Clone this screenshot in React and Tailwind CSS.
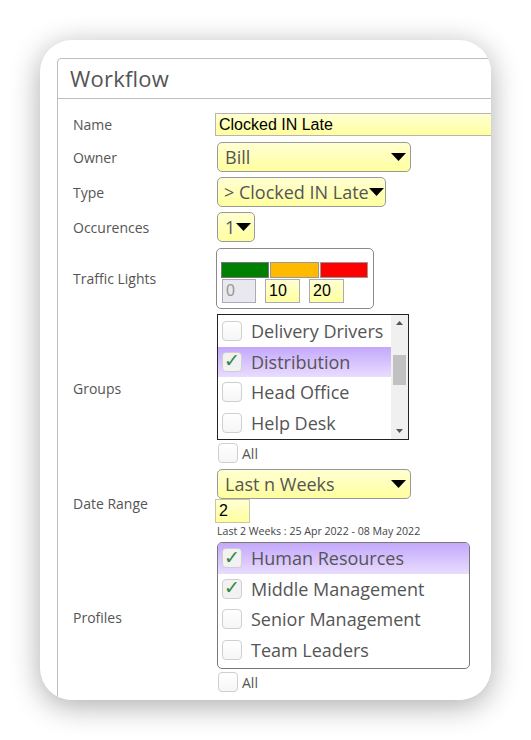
import React from "react";

const OS = { fontFamily: '"Open Sans", "Noto Sans", sans-serif' };
const AR = { fontFamily: '"Liberation Sans", Arial, sans-serif' };

function Tri() {
  return (
    <svg width="15" height="8" viewBox="0 0 15 8" className="shrink-0">
      <path d="M0 0H15L7.5 8Z" fill="#000" />
    </svg>
  );
}

function Check({ checked }) {
  return (
    <div
      className={`w-[20px] h-[20px] shrink-0 rounded-[4px] border border-[#cfcfcf] flex items-center justify-center ${
        checked ? "bg-[#f2f2f2]" : "bg-gradient-to-b from-white to-[#f6f6f6]"
      }`}
    >
      {checked && (
        <span
          className="text-[#2f8a3c] text-[19px] leading-none font-bold -mt-[2px]"
          style={{ fontFamily: '"DejaVu Sans", sans-serif' }}
        >
          ✓
        </span>
      )}
    </div>
  );
}

function Item({ text, checked, hl }) {
  return (
    <div
      className={`flex items-center h-[30.5px] pl-[4px] gap-[9px] ${
        hl ? "bg-gradient-to-b from-[#c4a8fb] to-[#e9dcfe]" : ""
      }`}
    >
      <Check checked={checked} />
      <span className="text-[18px] text-[#555] whitespace-nowrap leading-none" style={OS}>
        {text}
      </span>
    </div>
  );
}

function Row({ label, children, className = "" }) {
  return (
    <div className={`flex items-center ${className}`}>
      <div className="w-[144px] shrink-0 text-[14px] text-[#555]" style={OS}>
        {label}
      </div>
      <div className="flex flex-col">{children}</div>
    </div>
  );
}

function AllBox() {
  return (
    <div className="flex items-center gap-[4px] mt-[3px] h-[20px]">
      <div className="w-[20px] h-[20px] rounded-[4px] border border-[#cfcfcf] bg-gradient-to-b from-white to-[#f6f6f6]" />
      <span className="text-[14px] text-[#555]" style={OS}>All</span>
    </div>
  );
}

export default function App() {
  return (
    <div className="w-[531px] h-[740px] bg-white pt-[40px] pl-[40px]">
      <div className="w-[451px] h-[660px] bg-white rounded-[32px] overflow-hidden shadow-[0_6px_30px_rgba(0,0,0,0.33)] pt-[18px] pl-[17px]">
        <div className="w-[520px] h-[700px] border border-[#bdbdbd] rounded-tl-[4px] bg-white">
          <div className="h-[40px] border-b border-[#bdbdbd] flex items-center pl-[12px]">
            <span className="text-[22px] text-[#555] tracking-[0.2px] font-medium" style={OS}>
              Workflow
            </span>
          </div>
          <div className="pl-[15px] pt-[14px] flex flex-col">
            <Row label="Name">
              <div
                className="-ml-[2px] w-[320px] h-[23px] border border-[#b5b5b5] bg-gradient-to-b from-[#ffffd2] to-[#ffff9e] pl-[3px] flex items-center text-[16px] text-black"
                style={AR}
              >
                Clocked IN Late
              </div>
            </Row>
            <Row label="Owner" className="mt-[6px]">
              <div className="w-[194px] h-[30px] rounded-[5px] border border-[#999] bg-gradient-to-b from-[#ffffd2] to-[#ffff9e] pl-[7px] pr-[4px] flex items-center justify-between">
                <span className="text-[18px] text-[#555]" style={OS}>Bill</span>
                <Tri />
              </div>
            </Row>
            <Row label="Type" className="mt-[5px]">
              <div className="w-[169px] h-[30px] rounded-[5px] border border-[#999] bg-gradient-to-b from-[#ffffd2] to-[#ffff9e] pl-[6px] pr-[4px] flex items-center justify-between">
                <span className="text-[18px] text-[#555] whitespace-nowrap" style={OS}>&gt; Clocked IN Late</span>
                <Tri />
              </div>
            </Row>
            <Row label="Occurences" className="mt-[5px]">
              <div className="w-[38px] h-[30px] rounded-[5px] border border-[#999] bg-gradient-to-b from-[#ffffd2] to-[#ffff9e] pl-[7px] pr-[3px] flex items-center justify-between">
                <span className="text-[18px] text-[#555]" style={OS}>1</span>
                <Tri />
              </div>
            </Row>
            <Row label="Traffic Lights" className="mt-[6px]">
              <div className="-ml-[1px] w-[158px] h-[61px] rounded-[5px] border border-[#8a8a8a] pl-[4px] pt-[13px]">
                <div className="flex w-[147px] h-[16px] gap-[1px]">
                  <div className="w-[48px] bg-[#008000] border border-[#777]" />
                  <div className="w-[49px] bg-[#ffba00] border border-[#999]" />
                  <div className="w-[48px] bg-[#ff0000] border border-[#999]" />
                </div>
                <div className="flex mt-[1px] gap-[9px] pl-[1px]">
                  <div className="w-[34px] h-[24px] border border-[#aab] bg-[#e8e8ee] pl-[3px] flex items-center text-[16px] text-[#999]" style={AR}>0</div>
                  <div className="w-[35px] h-[24px] border border-[#aab] bg-gradient-to-b from-[#ffffd2] to-[#ffff9e] pl-[3px] flex items-center text-[16px] text-black" style={AR}>10</div>
                  <div className="w-[35px] h-[24px] border border-[#aab] bg-gradient-to-b from-[#ffffd2] to-[#ffff9e] pl-[3px] flex items-center text-[16px] text-black" style={AR}>20</div>
                </div>
              </div>
            </Row>
            <Row label="Groups" className="mt-[5px]">
              <div className="w-[192px] h-[126px] border border-[#222] flex">
                <div className="flex-1 pt-[1px] overflow-hidden">
                  <Item text="Delivery Drivers" />
                  <Item text="Distribution" checked hl />
                  <Item text="Head Office" />
                  <Item text="Help Desk" />
                </div>
                <div className="w-[17px] bg-[#f0f0f0] flex flex-col items-center justify-between py-[6px] relative">
                  <svg width="7" height="4" viewBox="0 0 7 4"><path d="M0 4H7L3.5 0Z" fill="#555" /></svg>
                  <svg width="7" height="4" viewBox="0 0 7 4"><path d="M0 0H7L3.5 4Z" fill="#555" /></svg>
                  <div className="absolute left-[2px] top-[40px] w-[13px] h-[30px] bg-[#c1c1c1]" />
                </div>
              </div>
              <div className="ml-[1px]">
                <AllBox />
              </div>
            </Row>
            <Row label="Date Range" className="mt-[6px]">
              <div className="w-[194px] h-[30px] rounded-[5px] border border-[#999] bg-gradient-to-b from-[#ffffd2] to-[#ffff9e] pl-[7px] pr-[4px] flex items-center justify-between">
                <span className="text-[18px] text-[#555]" style={OS}>Last n Weeks</span>
                <Tri />
              </div>
              <div className="-ml-[2px] w-[35px] h-[24px] border border-[#c8c8a0] bg-gradient-to-b from-[#ffffd2] to-[#ffff9e] pl-[3px] flex items-center text-[16px] text-black" style={AR}>2</div>
              <div className="text-[10.6px] text-[#444] leading-[14px] mt-[1px] whitespace-nowrap" style={OS}>
                Last 2 Weeks : 25 Apr 2022 - 08 May 2022
              </div>
            </Row>
            <Row label="Profiles" className="mt-[4px]">
              <div className="w-[253px] h-[127px] rounded-[5px] border border-[#777] overflow-hidden">
                <Item text="Human Resources" checked hl />
                <Item text="Middle Management" checked />
                <Item text="Senior Management" />
                <Item text="Team Leaders" />
              </div>
              <div className="ml-[1px]">
                <AllBox />
              </div>
            </Row>
          </div>
        </div>
      </div>
    </div>
  );
}
